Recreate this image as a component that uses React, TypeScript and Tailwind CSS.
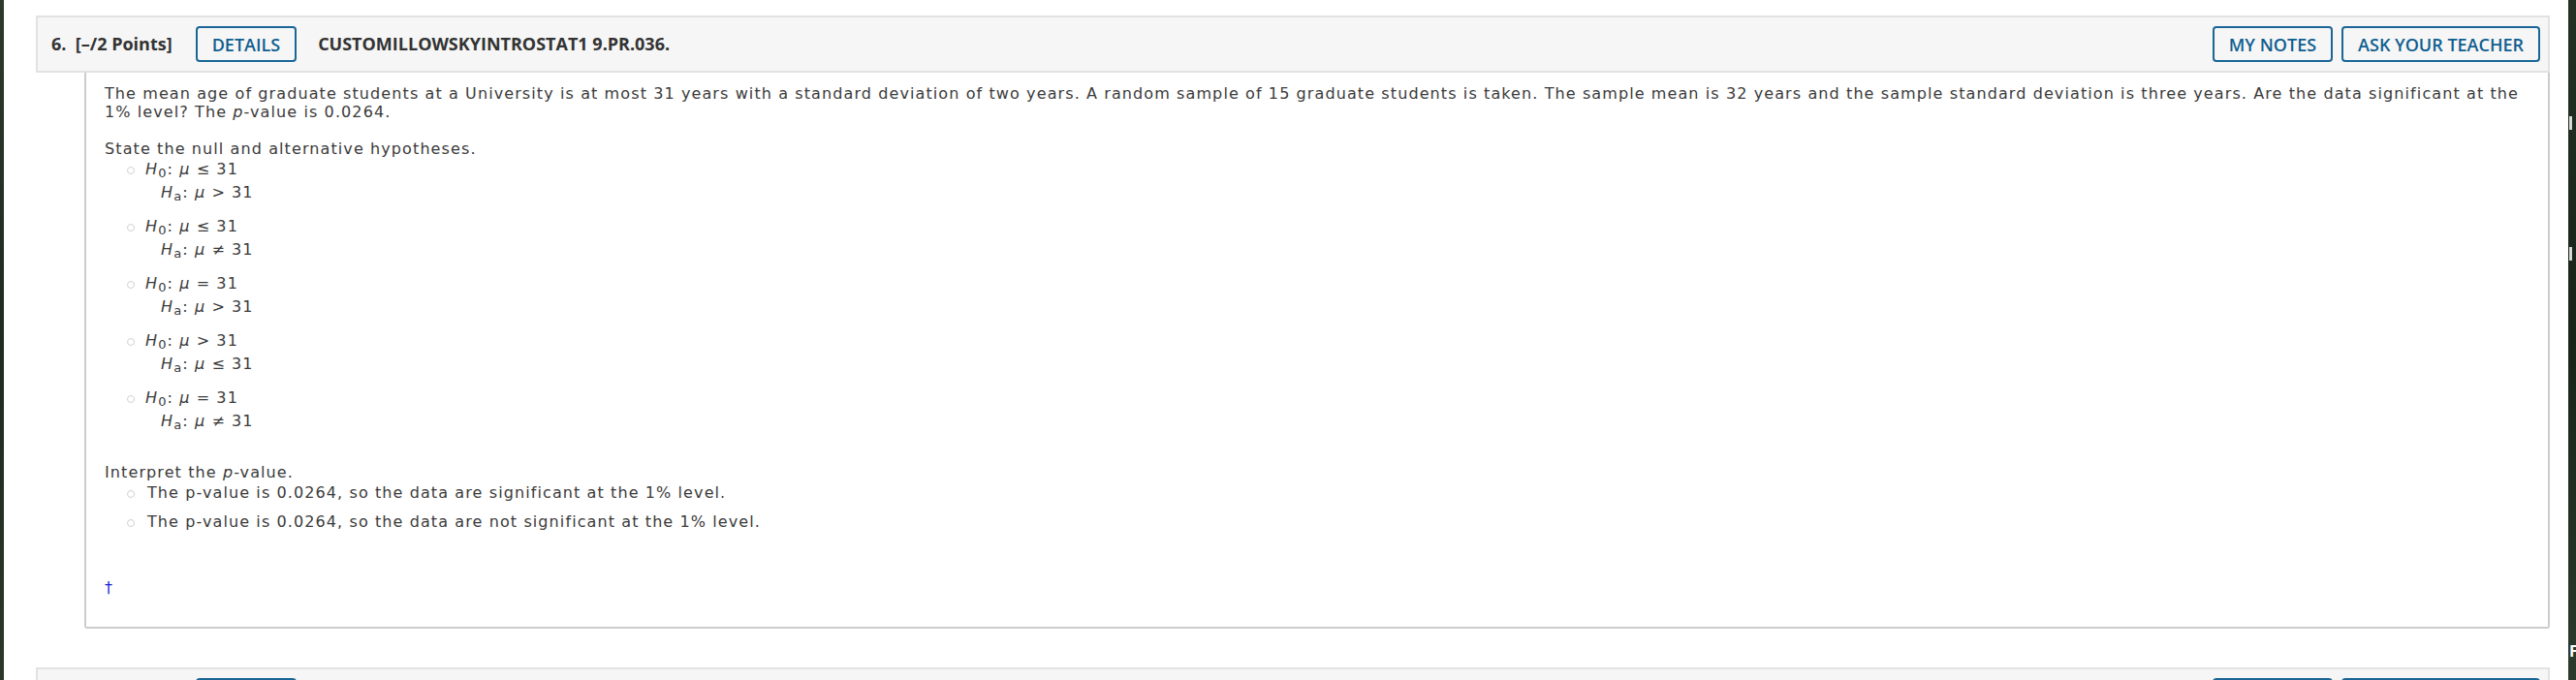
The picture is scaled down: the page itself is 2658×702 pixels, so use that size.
import React from 'react';

const HEAD_FONT = "font-['Open_Sans',Arial,sans-serif]";

const OutlineButton = ({ label }: { label: string }) => (
  <button
    type="button"
    className={`h-[37px] px-[15px] border-2 border-[#1b6697] rounded-[4px] bg-transparent text-[#0f5e90] text-[18px] font-semibold leading-none ${HEAD_FONT}`}
  >
    {label}
  </button>
);

const QuestionHeader = () => (
  <div className={`h-[59px] flex items-center border-2 border-[#e2e2e2] bg-[#f6f6f6] pl-[14px] pr-[8px] ${HEAD_FONT}`}>
    <span className="text-[18px] font-bold text-[#333333] whitespace-nowrap">6.&nbsp; [–/2 Points]</span>
    <div className="ml-[24px]">
      <OutlineButton label="DETAILS" />
    </div>
    <span className="ml-[22px] text-[18px] font-bold text-[#333333]">CUSTOMILLOWSKYINTROSTAT1 9.PR.036.</span>
    <div className="flex-1" />
    <div className="flex gap-[9px]">
      <OutlineButton label="MY NOTES" />
      <OutlineButton label="ASK YOUR TEACHER" />
    </div>
  </div>
);

const Radio = ({ top }: { top: string }) => (
  <span className={`shrink-0 w-[8px] h-[8px] rounded-full border border-[#d2d2d2] bg-white ${top}`} />
);

// one hypothesis pair: H0 and Ha
const hypotheses: [string, string][] = [
  ['≤', '>'],
  ['≤', '≠'],
  ['=', '>'],
  ['>', '≤'],
  ['=', '≠'],
];

const HLine = ({ sub, sign }: { sub: string; sign: string }) => (
  <div className="leading-[24px] whitespace-nowrap">
    <i>H</i>
    <sub className="text-[13px] not-italic">{sub}</sub>: <i>μ</i> {sign} 31
  </div>
);

const interpretations = [
  'The p-value is 0.0264, so the data are significant at the 1% level.',
  'The p-value is 0.0264, so the data are not significant at the 1% level.',
];

export default function App() {
  return (
    <div className="flex w-full h-[702px] overflow-hidden bg-white">
      <div className="w-[4px] shrink-0 bg-gradient-to-b from-[#2c3a2b] via-[#1d2b20] to-[#2a3828]" />

      <main className="flex-1 pt-[16px] pl-[33px] pr-[19px]">
        <section>
          <QuestionHeader />
          <div className="ml-[50px] border-x-2 border-b-2 border-[#cccccc] rounded-b-[3px] bg-white pl-[19px] pr-[20px] pt-[12px] pb-[31px] text-[16px] leading-[19px] tracking-[1.1px] text-[#3b3b3b] font-['DejaVu_Sans',Verdana,sans-serif]">
            <p>
              The mean age of graduate students at a University is at most 31 years with a standard deviation of two
              years. A random sample of 15 graduate students is taken. The sample mean is 32 years and the sample
              standard deviation is three years. Are the data significant at the 1% level? The <i>p</i>-value is
              0.0264.
            </p>

            <p className="mt-[19px]">State the null and alternative hypotheses.</p>
            <div className="flex flex-col gap-[11px]">
              {hypotheses.map(([h0, ha], i) => (
                <label key={i} className="flex items-start pl-[23px]">
                  <Radio top="mt-[9px]" />
                  <div className="ml-[11px]">
                    <HLine sub="0" sign={h0} />
                    <div className="pl-[16px]">
                      <HLine sub="a" sign={ha} />
                    </div>
                  </div>
                </label>
              ))}
            </div>

            <p className="mt-[31px]">
              Interpret the <i>p</i>-value.
            </p>
            <div className="mt-[2px] flex flex-col gap-[11px]">
              {interpretations.map((t, i) => (
                <label key={i} className="flex items-start pl-[23px]">
                  <Radio top="mt-[7px]" />
                  <span className="ml-[13px]">{t}</span>
                </label>
              ))}
            </div>

            <div className="mt-[49px] text-[#1f1fd6]">†</div>
          </div>
        </section>

        <section className="mt-[40px]">
          <QuestionHeader />
        </section>
      </main>

      <div className="w-[8px] shrink-0 relative bg-gradient-to-b from-[#233024] via-[#18241a] to-[#2b3a2c]">
        <span className="absolute left-[1px] top-[120px] w-[3px] h-[14px] bg-[#d8d8d8]" />
        <span className="absolute left-[1px] top-[255px] w-[3px] h-[14px] bg-[#d8d8d8]" />
        <span className="absolute left-[1px] top-[664px] text-[16px] font-bold leading-none text-white font-['Open_Sans',sans-serif]">F</span>
      </div>
    </div>
  );
}
